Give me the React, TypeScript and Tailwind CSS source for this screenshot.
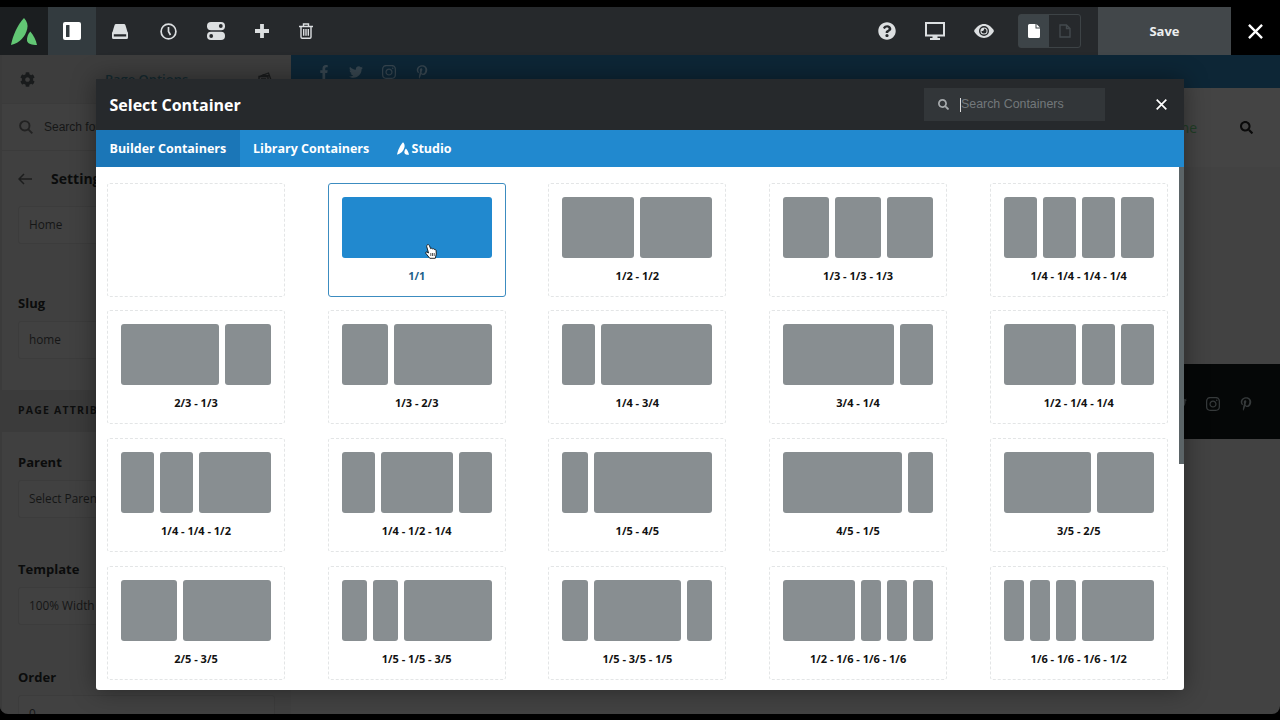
import type { ReactNode } from 'react'
import { FaCog, FaSearch, FaFacebookF, FaTwitter, FaInstagram, FaPinterestP, FaQuestionCircle } from 'react-icons/fa'

const containers = [
  [],
  ['1/1'],
  ['1/2', '1/2'],
  ['1/3', '1/3', '1/3'],
  ['1/4', '1/4', '1/4', '1/4'],
  ['2/3', '1/3'],
  ['1/3', '2/3'],
  ['1/4', '3/4'],
  ['3/4', '1/4'],
  ['1/2', '1/4', '1/4'],
  ['1/4', '1/4', '1/2'],
  ['1/4', '1/2', '1/4'],
  ['1/5', '4/5'],
  ['4/5', '1/5'],
  ['3/5', '2/5'],
  ['2/5', '3/5'],
  ['1/5', '1/5', '3/5'],
  ['1/5', '3/5', '1/5'],
  ['1/2', '1/6', '1/6', '1/6'],
  ['1/6', '1/6', '1/6', '1/2'],
]

// columns share a 156px track, each one giving up a 6px gutter
function columnWidth(size: string) {
  const [a, b] = size.split('/').map(Number)
  return (156 * a) / b - 6
}

function AvadaLogo({ className }: { className: string }) {
  return (
    <svg viewBox="0 0 26 27" className={className} fill="currentColor">
      <path d="M13 0C16 3 17.200 7 16.200 11C14.300 18.500 9 25 0 27C1.500 18.500 6.500 6.500 13 0Z" />
      <path d="M19.300 13.500C22.500 17 25 22 26 27C21 27 16.500 26 16 22.500C15.700 19.500 17 16 19.300 13.500Z" />
    </svg>
  )
}

function CloseIcon({ className }: { className: string }) {
  return (
    <svg viewBox="0 0 16 16" className={className} fill="none" stroke="currentColor" strokeWidth="2.500">
      <path d="M1 1L15 15M15 1L1 15" />
    </svg>
  )
}

function Toolbar() {
  return (
    <header className="flex h-12 shrink-0 items-center bg-[#26292c] text-[#dcdfe1]">
      <div className="flex h-12 w-12 items-center justify-center bg-[#1b1e20]">
        <AvadaLogo className="h-[27px] w-[26px] text-[#62c774]" />
      </div>
      <div className="flex h-12 w-12 items-center justify-center bg-[#333b3f]">
        <svg viewBox="0 0 18 18" className="h-[18px] w-[18px]">
          <rect width="18" height="18" rx="2" fill="#fff" />
          <rect x="3" y="3" width="3.500" height="12" rx="0.500" fill="#333b3f" />
        </svg>
      </div>
      <div className="flex w-12 justify-center">
        <svg viewBox="0 0 16 15" className="h-[15px] w-4" fill="currentColor">
          <path d="M4 0H12Q13 0 13.400 1L15.800 9H0.200L2.600 1Q3 0 4 0Z" />
          <path fillRule="evenodd" d="M0 8.500H16V13.500Q16 15 14.500 15H1.500Q0 15 0 13.500ZM1.800 10.200V12.600H14.200V10.200Z" />
        </svg>
      </div>
      <div className="flex w-12 justify-center">
        <svg viewBox="0 0 17 17" className="h-[17px] w-[17px]" fill="none" stroke="currentColor" strokeWidth="1.700">
          <circle cx="8.500" cy="8.500" r="7.400" />
          <path d="M8.500 4V8.500L10.500 12" />
        </svg>
      </div>
      <div className="flex w-12 justify-center">
        <svg viewBox="0 0 18 18" className="h-[18px] w-[18px]">
          <rect width="18" height="8.300" rx="4" fill="currentColor" />
          <rect y="9.700" width="18" height="8.300" rx="4" fill="currentColor" />
          <circle cx="13.800" cy="4" r="1.900" fill="#26292c" />
          <circle cx="4.200" cy="14" r="1.900" fill="#26292c" />
        </svg>
      </div>
      <div className="flex w-11 justify-center">
        <svg viewBox="0 0 14 14" className="h-[14px] w-[14px]" stroke="currentColor" strokeWidth="3.800">
          <path d="M7 0V14M0 7H14" />
        </svg>
      </div>
      <div className="flex w-11 justify-center">
        <svg viewBox="0 0 14 16" className="h-4 w-[14px]" fill="none" stroke="currentColor" strokeWidth="1.400">
          <path d="M0 3.500H14M4.500 3V1H9.500V3M2 3.500V14Q2 15.200 3.200 15.200H10.800Q12 15.200 12 14V3.500M4.700 6V12.700M7 6V12.700M9.300 6V12.700" />
        </svg>
      </div>

      <div className="ml-auto flex items-center">
        <FaQuestionCircle className="mr-[29px] h-[18px] w-[18px]" />
        <svg viewBox="0 0 20 18" className="mr-[29px] h-[18px] w-5" fill="none" stroke="currentColor" strokeWidth="2">
          <path d="M1 1H19V13.500H1ZM5 17H15" />
          <path d="M10 13V17" strokeWidth="5" />
        </svg>
        <svg viewBox="0 0 20 14" className="mr-6 h-[14px] w-5">
          <path fill="currentColor" d="M0 7C5 -2.300 15 -2.300 20 7C15 16.300 5 16.300 0 7Z" />
          <circle cx="10" cy="7" r="4.300" fill="none" stroke="#26292c" strokeWidth="1.400" />
          <path fill="#26292c" d="M10 4.500A2.500 2.500 0 1 1 7.500 7A2 2 0 0 0 10 4.500Z" />
        </svg>
        <div className="mr-[17px] flex h-[34px] w-[63px] rounded-[3px] border border-[#3d4346]">
          <div className="flex w-[30px] items-center justify-center bg-[#3d4448] text-white">
            <svg viewBox="0 0 12 14" className="h-[14px] w-3" fill="currentColor">
              <path d="M1.500 0H7.500V4.500H12V12.500Q12 14 10.500 14H1.500Q0 14 0 12.500V1.500Q0 0 1.500 0ZM8.500 0L12 3.500H8.500Z" />
            </svg>
          </div>
          <div className="flex flex-1 items-center justify-center text-[#43494d]">
            <svg viewBox="0 0 12 14" className="h-[14px] w-3" fill="none" stroke="currentColor" strokeWidth="1.400">
              <path d="M1 1H7.500L11 4.500V13H1ZM7.500 1V4.500H11" />
            </svg>
          </div>
        </div>
        <button className="h-12 w-[133px] bg-[#42474a] pt-px text-[13px] font-bold text-[#eceeef]">Save</button>
        <button className="flex h-12 w-[49px] items-center justify-center bg-black text-white">
          <CloseIcon className="h-[15px] w-[15px]" />
        </button>
      </div>
    </header>
  )
}

function Field({ label, value, className }: { label?: string; value: string; className: string }) {
  return (
    <div className={className}>
      {label && <div className="mb-2 h-5 text-[13px] leading-5 font-bold text-[#0b0c0c]">{label}</div>}
      <div className="flex h-[38px] items-center rounded-[3px] border border-[#3c3c3c] bg-[#414141] pl-2.5 text-[11.800px] whitespace-nowrap text-[#151616]">
        {value}
      </div>
    </div>
  )
}

function Sidebar() {
  return (
    <aside className="w-[291px] shrink-0 overflow-hidden border-l-2 border-[#3b3b3b] bg-[#404040]">
      <div className="flex h-12 items-center bg-[#3d3d3d] text-[#191b1c]">
        <FaCog className="ml-[18px] h-[15px] w-[15px]" />
        <span className="mt-px ml-[70px] text-[13px] font-semibold text-[#152a30]">Page Options</span>
        <svg viewBox="0 0 14 14" className="ml-[70px] h-[14px] w-[14px]" fill="none" stroke="currentColor" strokeWidth="1.300">
          <path d="M1 4.500L10.500 1L13 8L10 10M1 4.500H10V13H1ZM3 7H8M3 10H8M4 3.400L11 3.600" />
        </svg>
      </div>
      <div className="flex h-12 items-center border-y border-[#3b3b3b] font-['Liberation_Sans',sans-serif] text-[12px] text-[#161717]">
        <svg viewBox="0 0 14 14" className="ml-[17px] h-[14px] w-[14px] text-[#222]" fill="none" stroke="currentColor" strokeWidth="1.900">
          <circle cx="5.800" cy="5.800" r="4.700" />
          <path d="M9.300 9.300L13.300 13.300" />
        </svg>
        <span className="ml-[11px]">Search for option(s)</span>
      </div>
      <div className="flex h-[55px] items-center text-[14px] font-bold text-[#0b0c0c]">
        <svg viewBox="0 0 14 12" className="mr-[18px] ml-4 h-3 w-[14px] text-[#1c1d1d]" fill="none" stroke="currentColor" strokeWidth="1.500">
          <path d="M14 6H1M6 1L1 6L6 11" />
        </svg>
        <span className="ml-px">Settings</span>
      </div>
      <div className="px-4">
        <Field value="Home" />
        <Field label="Slug" value="home" className="mt-[49px]" />
      </div>
      <div className="mt-[31px] flex h-[42px] items-center bg-[#3b3b3b] pl-4 text-[10.500px] font-bold tracking-[1.200px] text-[#0d0e0e]">
        PAGE ATTRIBUTES
      </div>
      <div className="px-4">
        <Field label="Parent" value="Select Parent" className="mt-[20px]" />
        <Field label="Template" value="100% Width" className="mt-[41px]" />
        <Field label="Order" value="0" className="mt-[42px]" />
      </div>
    </aside>
  )
}

function PagePreview() {
  return (
    <div className="flex min-w-0 flex-1 flex-col bg-[#424242]">
      <div className="flex h-[33px] shrink-0 items-center gap-[18px] bg-[#0d2636] pl-[26px] text-[#36454f]">
        <FaFacebookF className="h-[14px] w-[14px]" />
        <FaTwitter className="h-[14px] w-[14px]" />
        <FaInstagram className="h-4 w-4" />
        <FaPinterestP className="h-[14px] w-[14px]" />
      </div>
      <div className="flex h-[79px] shrink-0 items-center justify-end bg-[#444] pr-[27px]">
        <span className="mr-[43px] text-[14px] text-[#1f3d25]">Home</span>
        <FaSearch className="h-[13px] w-[13px] text-[#0a0a0a]" />
      </div>
      <div className="h-[197px] shrink-0" />
      <div className="flex h-[75px] shrink-0 items-center justify-end gap-[18px] bg-[#050707] pt-1 pr-[27px] text-[#363a3b]">
        <FaTwitter className="h-[14px] w-[14px]" />
        <FaInstagram className="h-4 w-4" />
        <FaPinterestP className="h-[14px] w-[14px]" />
      </div>
    </div>
  )
}

function Tab({ active, children }: { active?: boolean; children: ReactNode }) {
  return (
    <div
      className={
        active
          ? 'flex h-full w-[143.500px] items-center gap-[3px] bg-[#1b76b7] pl-[13.500px]'
          : 'flex h-full w-[143.500px] items-center gap-[3px] pl-[13.500px]'
      }
    >
      {children}
    </div>
  )
}

function ContainerCard({ sizes }: { sizes: string[] }) {
  const hovered = sizes[0] === '1/1'
  return (
    <div
      className={
        hovered
          ? 'relative h-[114px] w-[178px] rounded-[3px] border border-[#3c8cc0] px-[13px] pt-[13px] text-[#235f8a]'
          : 'h-[114px] w-[178px] rounded-[3px] border border-dashed border-[#e3e5e6] px-[13px] pt-[13px] text-[#111]'
      }
    >
      <div className="flex gap-1.5">
        {sizes.map((size, i) => (
          <div
            key={i}
            className={hovered ? 'h-[61px] shrink-0 rounded-[3px] bg-[#2189cf]' : 'h-[61px] shrink-0 rounded-[3px] bg-[#888e91]'}
            style={{ width: columnWidth(size) }}
          />
        ))}
      </div>
      <div className="mt-[9px] text-center text-[11px] leading-[18px] font-bold whitespace-nowrap">{sizes.join(' - ')}</div>
      {hovered && (
        <svg viewBox="0 0 12 15" className="absolute top-[60px] left-[96px] h-[15px] w-3">
          <path
            d="M2.500 0.800Q3.700 0.200 4.400 1.500L5.600 4.600Q6.600 3.800 7.400 4.800Q8.500 4.200 9.200 5.400Q10.700 5 11.100 6.700L11.300 10L10.300 14.300H4.800L0.800 9.300Q0.300 8 1.800 7.900L3.500 9L1.700 2.400Q1.500 1.300 2.500 0.800Z"
            fill="#fff"
            stroke="#111"
            strokeWidth="0.900"
          />
          <path d="M5.800 9V12M7.500 9V12M9.200 9V12" stroke="#111" strokeWidth="0.700" />
        </svg>
      )}
    </div>
  )
}

function ContainerModal() {
  return (
    <div className="absolute top-[79px] left-24 flex h-[611px] w-[1088px] flex-col overflow-hidden rounded-b-[3px] bg-white shadow-[0_0_25px_rgba(0,0,0,0.4)]">
      <div className="flex h-[51.400px] shrink-0 items-center bg-[#26292c] text-white">
        <h2 className="ml-[13.500px] text-[16px] font-bold">Select Container</h2>
        <div className="mr-[51px] ml-auto flex h-[33px] w-[181px] items-center bg-[#323639] pl-[14px] font-['Liberation_Sans',sans-serif] text-[12.400px] text-[#73787b]">
          <FaSearch className="mr-[11px] h-[11px] w-[11px] text-[#a6aaac]" />
          <span className="h-[14px] w-px bg-[#ddd]" />
          Search Containers
        </div>
        <CloseIcon className="mr-[17px] h-[11px] w-[11px]" />
      </div>
      <div className="flex h-[37px] shrink-0 items-center bg-[#2189cf] text-[12.500px] font-bold text-white">
        <Tab active>Builder Containers</Tab>
        <Tab>Library Containers</Tab>
        <Tab>
          <AvadaLogo className="h-[13px] w-3" />
          <span>Studio</span>
        </Tab>
      </div>
      <div className="flex min-h-0 flex-1">
        <div className="grid flex-1 grid-cols-[repeat(5,178px)] content-start gap-x-[42.700px] gap-y-[13.900px] pt-[15.200px] pl-[11px]">
          {containers.map((sizes) => (
            <ContainerCard key={sizes.join('-')} sizes={sizes} />
          ))}
        </div>
        <div className="h-[297px] w-[5px] bg-[#5b6467]" />
      </div>
    </div>
  )
}

export default function App() {
  return (
    <div className="relative flex h-[720px] w-[1280px] flex-col overflow-hidden bg-black pt-[7px] pb-[6px] font-['Open_Sans','Noto_Sans',sans-serif]">
      <Toolbar />
      <div className="flex min-h-0 flex-1 overflow-hidden rounded-b-lg">
        <Sidebar />
        <PagePreview />
      </div>
      <ContainerModal />
    </div>
  )
}
